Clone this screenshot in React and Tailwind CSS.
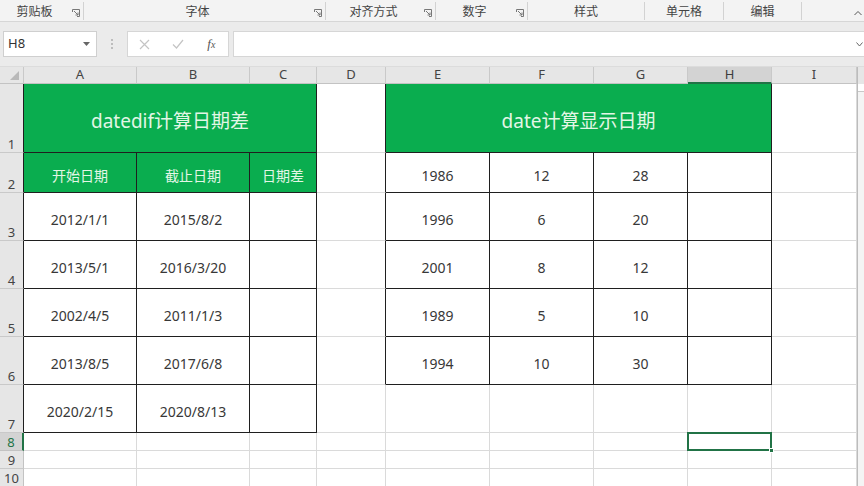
import React from 'react';

const FONT = { fontFamily: '"Noto Sans", "Noto Sans CJK SC", sans-serif' };

const GREEN = 'bg-[#0aad4f]';
const GREEN_TEXT = 'text-[#e3f6e6]';

const R_GRAY = 'border-r border-r-[#dadada]';
const R_DARK = 'border-r border-r-[#1f1f1f]';
const B_GRAY = 'border-b border-b-[#dadada]';
const B_DARK = 'border-b border-b-[#1f1f1f]';

const COLS = ['A', 'B', 'C', 'D', 'E', 'F', 'G', 'H', 'I'];

const TABLE1 = [
	['2012/1/1', '2015/8/2'],
	['2013/5/1', '2016/3/20'],
	['2002/4/5', '2011/1/3'],
	['2013/8/5', '2017/6/8'],
	['2020/2/15', '2020/8/13'],
];

const TABLE2 = [
	['1986', '12', '28'],
	['1996', '6', '20'],
	['2001', '8', '12'],
	['1989', '5', '10'],
	['1994', '10', '30'],
];

function Launcher() {
	return (
		<svg width="8" height="8" viewBox="0 0 8 8" className="shrink-0">
			<path d="M0.5 3V0.5H7.5V7.5H5" fill="none" stroke="#777" strokeWidth="1" />
			<path d="M2 2L6 6M6 3.5V6H3.5" fill="none" stroke="#777" strokeWidth="1" />
		</svg>
	);
}

function Group({ label, width, launcher }) {
	return (
		<div className={`flex items-center h-[18px] border-r border-r-[#d2d2d2] ${width}`}>
			<div className="flex-1 text-center text-[12px] leading-none pt-[2px] text-[#444]">{label}</div>
			{launcher ? (
				<div className="w-[14px] flex justify-center pt-[3px]">
					<Launcher />
				</div>
			) : null}
		</div>
	);
}

function Ribbon() {
	return (
		<div className="h-[22px] bg-[#f3f3f3] border-b border-b-[#d6d6d6] flex items-start pt-[2px]">
			<Group label="剪贴板" width="w-[84px]" launcher />
			<Group label="字体" width="w-[242px]" launcher />
			<Group label="对齐方式" width="w-[110px]" launcher />
			<Group label="数字" width="w-[92px]" launcher />
			<Group label="样式" width="w-[117px]" />
			<Group label="单元格" width="w-[79px]" />
			<Group label="编辑" width="w-[78px]" />
			<div className="flex-1 flex justify-end pr-[2px] pt-[8px]">
				<svg width="8" height="6" viewBox="0 0 8 6">
					<path d="M0.5 5L4 1.5L7.5 5" fill="none" stroke="#555" strokeWidth="1" />
				</svg>
			</div>
		</div>
	);
}

function FormulaBar() {
	return (
		<div className="h-[45px] bg-[#ebebeb] pt-[9px] border-b border-b-[#dcdcdc]">
			<div className="h-[26px] flex items-stretch">
				<div className="ml-[3px] w-[94px] bg-white border border-[#cfcfcf] flex items-center pl-[4px] pr-[6px]">
					<span className="flex-1 text-[13px] text-[#333]">H8</span>
					<svg width="7" height="4" viewBox="0 0 7 4">
						<path d="M0 0H7L3.5 4Z" fill="#666" />
					</svg>
				</div>
				<div className="w-[30px] flex flex-col items-center justify-center gap-[2px]">
					<span className="w-[2px] h-[2px] bg-[#bdbdbd]" />
					<span className="w-[2px] h-[2px] bg-[#bdbdbd]" />
					<span className="w-[2px] h-[2px] bg-[#bdbdbd]" />
				</div>
				<div className="w-[102px] bg-white border border-[#d6d6d6] flex items-center">
					<div className="w-[34px] flex justify-center">
						<svg width="11" height="11" viewBox="0 0 11 11">
							<path d="M1 1L10 10M10 1L1 10" stroke="#c4c4c4" strokeWidth="1.2" />
						</svg>
					</div>
					<div className="w-[34px] flex justify-center">
						<svg width="12" height="10" viewBox="0 0 12 10">
							<path d="M1 5.5L4.5 9L11 1" fill="none" stroke="#c4c4c4" strokeWidth="1.2" />
						</svg>
					</div>
					<div className="w-[34px] flex justify-center">
						<span className="text-[13px] italic text-[#555]" style={{ fontFamily: '"Liberation Serif", serif' }}>
							f<span className="text-[10px]">x</span>
						</span>
					</div>
				</div>
				<div className="ml-[4px] flex-1 bg-white border border-[#d6d6d6] border-r-0 flex items-center justify-end pr-[1px]">
					<svg width="7" height="5" viewBox="0 0 7 5">
						<path d="M0.5 0.5L3.5 4L6.5 0.5" fill="none" stroke="#666" strokeWidth="1" />
					</svg>
				</div>
			</div>
		</div>
	);
}

function ColumnHeaders() {
	return (
		<>
			<div className="bg-[#e6e6e6] border-r border-r-[#c9c9c9] border-b border-b-[#c3c3c3] relative">
				<svg width="9" height="9" viewBox="0 0 9 9" className="absolute right-[4px] bottom-[3px]">
					<path d="M9 0V9H0Z" fill="#b9b9b9" />
				</svg>
			</div>
			{COLS.map((c) =>
				c === 'H' ? (
					<div
						key={c}
						className="bg-[#d3d3d3] border-r border-r-[#c9c9c9] border-b-2 border-b-[#217346] flex items-center justify-center text-[13px] text-[#3c3c3c]"
					>
						{c}
					</div>
				) : (
					<div
						key={c}
						className="bg-[#e6e6e6] border-r border-r-[#c9c9c9] border-b border-b-[#c3c3c3] flex items-center justify-center text-[13px] text-[#444]"
					>
						{c}
					</div>
				)
			)}
		</>
	);
}

function RowHeader({ n, dark, selected }) {
	if (selected) {
		return (
			<div className="bg-[#d3d3d3] border-r-2 border-r-[#217346] border-b border-b-[#c3c3c3] flex items-end justify-center text-[13px] leading-[16px] text-[#217346]">
				{n}
			</div>
		);
	}
	return (
		<div
			className={`bg-[#e6e6e6] border-b border-b-[#c9c9c9] flex items-end justify-center text-[13px] leading-[16px] text-[#444] ${
				dark ? R_DARK : 'border-r border-r-[#c3c3c3]'
			}`}
		>
			{n}
		</div>
	);
}

function Cell({ children, r = R_GRAY, b = B_GRAY, className = '' }) {
	return (
		<div className={`flex items-center justify-center pt-[5px] text-[14px] text-[#383838] ${r} ${b} ${className}`}>
			{children}
		</div>
	);
}

function Sheet() {
	const rows = [];

	// row 1: merged green titles
	rows.push(
		<React.Fragment key="r1">
			<RowHeader n={1} dark />
			<div className={`col-span-3 ${GREEN} ${R_DARK} ${B_DARK} flex items-center justify-center pt-[7px] text-[19px] ${GREEN_TEXT}`}>
				datedif计算日期差
			</div>
			<Cell r={R_DARK} />
			<div className={`col-span-4 ${GREEN} ${R_DARK} ${B_DARK} flex items-center justify-center pt-[7px] text-[19px] ${GREEN_TEXT}`}>
				date计算显示日期
			</div>
			<Cell />
		</React.Fragment>
	);

	// row 2: table 1 header, table 2 first data row
	rows.push(
		<React.Fragment key="r2">
			<RowHeader n={2} dark />
			{['开始日期', '截止日期', '日期差'].map((t) => (
				<Cell key={t} r={R_DARK} b={B_DARK} className={`${GREEN} ${GREEN_TEXT}`}>
					{t}
				</Cell>
			))}
			<Cell r={R_DARK} />
			{TABLE2[0].map((v, i) => (
				<Cell key={i} r={R_DARK} b={B_DARK}>
					{v}
				</Cell>
			))}
			<Cell r={R_DARK} b={B_DARK} />
			<Cell />
		</React.Fragment>
	);

	// rows 3..7
	for (let i = 0; i < 5; i++) {
		const rowNo = i + 3;
		const t2 = TABLE2[i + 1];
		rows.push(
			<React.Fragment key={`r${rowNo}`}>
				<RowHeader n={rowNo} dark />
				<Cell r={R_DARK} b={B_DARK}>{TABLE1[i][0]}</Cell>
				<Cell r={R_DARK} b={B_DARK}>{TABLE1[i][1]}</Cell>
				<Cell r={R_DARK} b={B_DARK} />
				<Cell r={t2 ? R_DARK : R_GRAY} />
				{t2 ? (
					<>
						{t2.map((v, j) => (
							<Cell key={j} r={R_DARK} b={B_DARK}>
								{v}
							</Cell>
						))}
						<Cell r={R_DARK} b={B_DARK} />
					</>
				) : (
					<>
						<Cell />
						<Cell />
						<Cell />
						<Cell />
					</>
				)}
				<Cell />
			</React.Fragment>
		);
	}

	// rows 8..10
	for (let n = 8; n <= 10; n++) {
		rows.push(
			<React.Fragment key={`r${n}`}>
				<RowHeader n={n} selected={n === 8} />
				{COLS.map((c) =>
					n === 8 && c === 'H' ? (
						<div key={c} className={`relative ${R_GRAY} ${B_GRAY}`}>
							<div className="absolute -top-[1px] -left-[1px] -right-[1px] -bottom-[1px] border-2 border-[#217346]" />
							<div className="absolute -right-[3px] -bottom-[3px] w-[5px] h-[5px] bg-[#217346] border border-white" />
						</div>
					) : (
						<Cell key={c} />
					)
				)}
			</React.Fragment>
		);
	}

	return (
		<div className="flex">
			<div className="w-[857px] grid grid-cols-[24px_113px_113px_67px_69px_104px_104px_94px_84px_85px] grid-rows-[17px_69px_40px_48px_48px_48px_48px_48px_18px_18px_18px] bg-white">
				<ColumnHeaders />
				{rows}
			</div>
			<div className="w-[7px] bg-[#f4f4f4] border-l border-l-[#bcbcbc] flex flex-col">
				<div className="h-[17px] bg-[#e6e6e6]" />
				<div className="h-[8px] border-b border-b-[#c8c8c8] bg-white" />
			</div>
		</div>
	);
}

export default function App() {
	return (
		<div className="w-[864px] h-[486px] overflow-hidden bg-white" style={FONT}>
			<Ribbon />
			<FormulaBar />
			<Sheet />
		</div>
	);
}
